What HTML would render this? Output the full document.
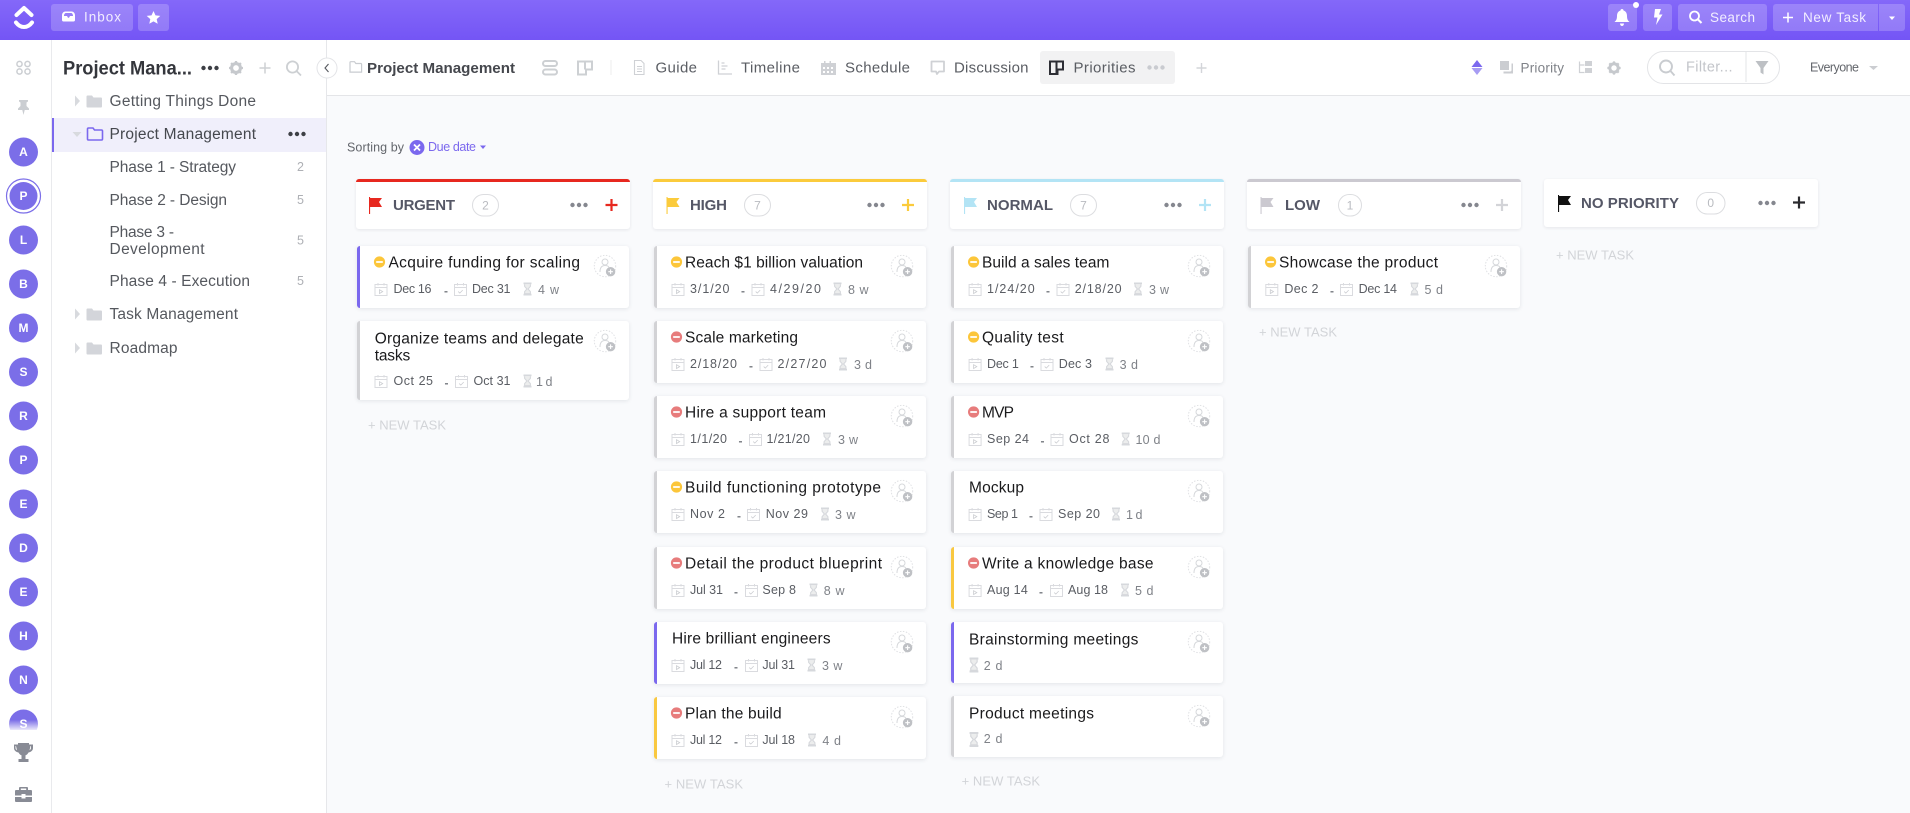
<!DOCTYPE html>
<html lang="en"><head><meta charset="utf-8"><title>Project Management - Priorities</title>
<style>
html,body{margin:0;padding:0;width:1910px;height:813px;overflow:hidden;background:#fff;font-family:"Liberation Sans",sans-serif}
.a{position:absolute}
#top{left:0;top:0;width:1910px;height:40px;background:linear-gradient(#8468f9,#7455f5)}
.b{position:absolute;top:4px;height:27px;background:rgba(255,255,255,.2);border-radius:3px}
#rail{left:0;top:40px;width:51px;height:773px;border-right:1px solid #e9eaed;background:#fff}
#side{left:52px;top:40px;width:274px;height:773px;border-right:1px solid #e6e7ea;background:#fff}
#sel{left:52px;top:118px;width:272px;height:34px;background:#f0effb;border-left:2px solid #7b68ee}
#main{left:327px;top:96px;width:1583px;height:717px;background:#f9fafc}
#hdr{left:327px;top:40px;width:1583px;height:55px;background:#fff;border-bottom:1px solid #e4e5e8}
#tab{left:1040px;top:51px;width:135px;height:33px;background:#f2f2f3;border-radius:3px}
#flt{left:1647px;top:51px;width:131px;height:31px;border:1px solid #e3e4e7;border-radius:17px;background:#fff}
.ch{position:absolute;background:#fff;border-radius:3px;box-shadow:0 1px 3px rgba(30,35,60,.09);box-sizing:border-box;border-top:3px solid}
.k{position:absolute;background:#fff;border-radius:3px;box-shadow:0 1px 4px rgba(30,35,60,.1);box-sizing:border-box;border-left:3px solid #d2d2d5}
svg{position:absolute;left:0;top:0;filter:blur(.3px)}
text{font-family:"Liberation Sans",sans-serif;dominant-baseline:central}
.t{font-size:15.5px;fill:#1a1a1c;transform:translateY(.8px)}
.m{font-size:12.5px;fill:#5a5d63}
.h{font-size:12.5px;fill:#7f8288}
.d{font-size:12px;font-weight:bold;fill:#7b7e84}
.s{font-size:15.5px;fill:#55585e;transform:translateY(.5px)}
.n{font-size:12.5px;fill:#aeb0b5}
.w{font-size:13.5px;fill:#f2eeff}
.v{font-size:15px;fill:#5a5d63}
.g{font-size:15px;font-weight:bold;fill:#555766;transform:translateY(.5px)}
.o{font-size:12px;fill:#b9bbc0;text-anchor:middle}
.nt{font-size:13px;fill:#d2d4d8}
.l{font-size:12px;font-weight:bold;fill:#fff;text-anchor:middle}
</style></head><body>
<div class="a" id="main"></div>
<div class="a" id="hdr"></div>
<div class="a" id="tab"></div>
<div class="a" id="flt"></div>
<div class="a" id="rail"></div>
<div class="a" id="side"></div>
<div class="a" id="sel"></div>
<div class="a" id="top"></div>
<div class="b" style="left:51px;width:82px"></div>
<div class="b" style="left:138px;width:31px"></div>
<div class="b" style="left:1608px;width:29px"></div>
<div class="b" style="left:1643px;width:29px"></div>
<div class="b" style="left:1678px;width:89px"></div>
<div class="b" style="left:1773px;width:105px;border-radius:3px 0 0 3px"></div>
<div class="b" style="left:1879px;width:26px;border-radius:0 3px 3px 0"></div>

<div class="ch" style="left:356px;top:179px;width:274px;height:50px;border-top-color:#e7281f"></div>
<div class="ch" style="left:653px;top:179px;width:274px;height:50px;border-top-color:#fbcb3c"></div>
<div class="ch" style="left:950px;top:179px;width:274px;height:50px;border-top-color:#b3e4f5"></div>
<div class="ch" style="left:1247px;top:179px;width:274px;height:50px;border-top-color:#cbc9d0"></div>
<div class="ch" style="left:1544px;top:179px;width:274px;height:48px;border-top:0"></div>

<div class="k" style="left:357px;top:246px;width:272px;height:62px;border-left-color:#7b68ee"></div>
<div class="k" style="left:357px;top:321px;width:272px;height:79px"></div>

<div class="k" style="left:654px;top:246px;width:272px;height:62px"></div>
<div class="k" style="left:654px;top:321px;width:272px;height:62px"></div>
<div class="k" style="left:654px;top:396px;width:272px;height:62px"></div>
<div class="k" style="left:654px;top:471px;width:272px;height:62px"></div>
<div class="k" style="left:654px;top:547px;width:272px;height:62px"></div>
<div class="k" style="left:654px;top:622px;width:272px;height:62px;border-left-color:#7b68ee"></div>
<div class="k" style="left:654px;top:697px;width:272px;height:62px;border-left-color:#f9c840"></div>

<div class="k" style="left:951px;top:246px;width:272px;height:62px"></div>
<div class="k" style="left:951px;top:321px;width:272px;height:62px"></div>
<div class="k" style="left:951px;top:396px;width:272px;height:62px"></div>
<div class="k" style="left:951px;top:471px;width:272px;height:62px"></div>
<div class="k" style="left:951px;top:547px;width:272px;height:62px;border-left-color:#f9c840"></div>
<div class="k" style="left:951px;top:622px;width:272px;height:61px;border-left-color:#7b68ee"></div>
<div class="k" style="left:951px;top:696px;width:272px;height:61px"></div>

<div class="k" style="left:1248px;top:246px;width:272px;height:62px"></div>

<svg width="1910" height="813" viewBox="0 0 1910 813" xmlns="http://www.w3.org/2000/svg">
<defs>
<linearGradient id="fd" x1="0" y1="0" x2="0" y2="1"><stop offset="0" stop-color="#fff" stop-opacity="0"/><stop offset="1" stop-color="#fff" stop-opacity=".85"/></linearGradient>
<g id="c1" fill="none" stroke="#dadbdf"><rect x=".5" y="1.5" width="12" height="11"/><path d="M.5 4.5h12M3.5 0v2.5M9.5 0v2.5"/><path d="M5 6.7v3.8l3.2-1.900z" stroke="#cbcdd1" stroke-width=".8"/></g>
<g id="c2" fill="none" stroke="#dadbdf"><rect x=".5" y="1.5" width="12" height="11"/><path d="M.5 4.5h12M3.5 0v2.5M9.5 0v2.5"/><path d="M4.2 8.6l1.600 1.500 2.900-3" stroke="#cbcdd1" stroke-width=".8"/></g>
<g id="hg"><path d="M.5 0h8v1.800H.5zM.5 11.200h8V13h-8z" fill="#d6d8dc"/><path d="M1.600 1.800v2L3.900 6.500 1.600 9.200v2h5.800v-2L5.100 6.500 7.400 3.800v-2" fill="#eceded" stroke="#d6d8dc" stroke-width="1.100"/></g>
<g id="st"><circle r="5.600" fill="currentColor"/><rect x="-3.400" y="-.9" width="6.800" height="1.800" rx=".6" fill="#fff"/></g>
<g id="av"><circle r="10.700" fill="none" stroke="#e0e1e4" stroke-width="1" stroke-dasharray="1.500 1.500"/><circle cy="-4" r="3" fill="none" stroke="#d6d8db"/><path d="M-5 6c0-5 2-6.500 5-6.500 2 0 3.500.5 4 2" fill="none" stroke="#d6d8db"/><circle cx="5.600" cy="5.700" r="4.700" fill="#bfc1c5"/><path d="M3.300 5.700h4.600M5.600 3.400v4.600" stroke="#fff" stroke-width="1.100"/></g>
<g id="dots" fill="currentColor"><circle cx="2.500" r="2.200"/><circle cx="9" r="2.200"/><circle cx="15.500" r="2.200"/></g>
<path id="fl" d="M0 0h1.100v17H0zM1.100 1H13l-3 4 3 5H1.100z" fill="currentColor"/>
<path id="pl" d="M-1.100-6h2.200v4.900H6v2.200H1.100V6h-2.200V1.100H-6v-2.200h4.900z" fill="currentColor"/>
<g id="fo"><path d="M0 2a1 1 0 0 1 1-1h4.500l1.500 2h7.500a1 1 0 0 1 1 1v8a1 1 0 0 1-1 1H1a1 1 0 0 1-1-1z" fill="#d3d5da"/></g>
<path id="tri" d="M0 0l5 5.500-5 5.500z" fill="#d8dade"/>
<g id="gr"><circle r="5.400" fill="none" stroke="currentColor" stroke-width="3.800"/><g stroke="currentColor" stroke-width="2.800"><path d="M0-8.500v3M0 8.500v-3M-8.500 0h3M8.500 0h-3M-6-6l2 2M6 6L4 4M-6 6l2-2M6-6L4-4"/></g></g>
</defs>

<!-- top bar -->
<path d="M16.500 15L24 8l7.500 7M16 22.500c4.500 6 11.500 6 16 0" fill="none" stroke="#fff" stroke-width="4" stroke-linecap="round" stroke-linejoin="round"/>
<path d="M62 20v-4.500c0-2.500 1.500-4 3.500-4h6c2 0 3.500 1.500 3.500 4V20c0 1-.7 1.500-1.500 1.500h-10c-.8 0-1.500-.5-1.500-1.500zm2-4h3l1 1.700h1l1-1.700h3c0-1.700-.8-3-2-3h-5c-1.200 0-2 1.300-2 3z" fill="#fff"/>
<text class="w" x="84" y="17" textLength="37">Inbox</text>
<path d="M153.500 11l2 4.400 4.800.5-3.600 3.200 1 4.700-4.200-2.400-4.200 2.400 1-4.700-3.600-3.200 4.800-.5z" fill="#fff"/>
<path d="M1622 9c.8 0 1.500.6 1.500 1.500 2.700.8 3.500 3.200 3.500 5.500 0 3 .8 4.500 2.500 6h-15c1.700-1.500 2.500-3 2.500-6 0-2.300.8-4.700 3.500-5.500 0-.9.700-1.500 1.500-1.500zM1620 23.500h4c0 1.500-1 2.500-2 2.500s-2-1-2-2.500z" fill="#fff"/>
<circle cx="1636" cy="5" r="3" fill="#fff"/>
<path d="M1655 9h6l-2 5.500h3.500l-6.500 10.500 1.500-7.500h-3.500z" fill="#fff"/>
<circle cx="1694.500" cy="16" r="4.500" fill="none" stroke="#fff" stroke-width="1.800"/><path d="M1698 19.500l3.500 3.500" stroke="#fff" stroke-width="2"/>
<text class="w" x="1710" y="17.500" textLength="45">Search</text>
<path d="M1783 17.500h10M1788 12.500v10" stroke="#fff" stroke-width="1.500"/>
<text class="w" x="1803" y="17.500" textLength="63">New Task</text>
<path d="M1889 16.500h6l-3 3.500z" fill="#fff"/>

<!-- rail -->
<g fill="none" stroke="#cbced2" stroke-width="1.500"><circle cx="19.500" cy="64" r="2.600"/><circle cx="27.500" cy="64" r="2.600"/><circle cx="19.500" cy="71.500" r="2.600"/><circle cx="27.500" cy="71.500" r="2.600"/></g>
<path d="M19 100h9v1.500l-1.500 1v3.500l2.500 2.500v1.500h-4.300l-1.200 5-1.200-5H18v-1.500l2.500-2.500v-3.500l-1.500-1z" fill="#cbced2"/>
<g fill="#7b6ee8">
<circle cx="23.500" cy="152" r="14.500"/><circle cx="23.500" cy="196" r="14"/><circle cx="23.500" cy="240" r="14.500"/><circle cx="23.500" cy="284" r="14.500"/><circle cx="23.500" cy="328" r="14.500"/><circle cx="23.500" cy="372" r="14.500"/><circle cx="23.500" cy="416" r="14.500"/><circle cx="23.500" cy="460" r="14.500"/><circle cx="23.500" cy="504" r="14.500"/><circle cx="23.500" cy="548" r="14.500"/><circle cx="23.500" cy="592" r="14.500"/><circle cx="23.500" cy="636" r="14.500"/><circle cx="23.500" cy="680" r="14.500"/><circle cx="23.500" cy="724" r="14.500"/>
</g>
<circle cx="23.500" cy="196" r="17" fill="none" stroke="#7b6ee8" stroke-width="1.200"/>
<text class="l" x="23.500" y="152">A</text><text class="l" x="23.500" y="196">P</text><text class="l" x="23.500" y="240">L</text><text class="l" x="23.500" y="284">B</text><text class="l" x="23.500" y="328">M</text><text class="l" x="23.500" y="372">S</text><text class="l" x="23.500" y="416">R</text><text class="l" x="23.500" y="460">P</text><text class="l" x="23.500" y="504">E</text><text class="l" x="23.500" y="548">D</text><text class="l" x="23.500" y="592">E</text><text class="l" x="23.500" y="636">H</text><text class="l" x="23.500" y="680">N</text><text class="l" x="23.500" y="724">S</text>
<rect x="5" y="720" width="40" height="10" fill="url(#fd)"/><rect x="5" y="730" width="40" height="12" fill="#fff"/>
<path d="M18 743h11v1.500h4v3.500c0 2.500-2 4-4.500 4.500-.7 1.500-2 2.500-3 2.800V759h3v3h-10v-3h3v-3.700c-1-.3-2.300-1.300-3-2.800-2.500-.5-4.500-2-4.500-4.500v-3.500h4zm-2 3h-.5v2c0 1 .8 1.800 1.500 2.200zm15 0h-.5l-1 4.200c.7-.4 1.500-1.200 1.500-2.200z" fill="#888b95"/>
<path d="M20 787h7a1 1 0 0 1 1 1v2h3a1 1 0 0 1 1 1v4.500h-6.500v-1.500h-4v1.500H15V791a1 1 0 0 1 1-1h3v-2a1 1 0 0 1 1-1zm.8 1.500v1.500h5.400v-1.500zM15 797h6.500v1.500h4V797H32v4a1 1 0 0 1-1 1H16a1 1 0 0 1-1-1z" fill="#888b95"/>

<!-- sidebar -->
<text x="63" y="68.500" font-size="19.500" font-weight="bold" fill="#34363c" textLength="129" lengthAdjust="spacingAndGlyphs">Project Mana...</text>
<use href="#dots" x="201" y="68" color="#3d3f45"/>
<use href="#gr" transform="translate(236 68) scale(.82)" color="#c6c9cd"/>
<path d="M259.500 68h11M265 62.500v11" stroke="#cdd0d3" stroke-width="1.500"/>
<circle cx="292.500" cy="67" r="5.600" fill="none" stroke="#cdd0d3" stroke-width="1.800"/><path d="M296.500 71l4.500 4.500" stroke="#cdd0d3" stroke-width="1.800"/>
<circle cx="327" cy="68" r="10" fill="#fff" stroke="#e3e4e7"/><path d="M328.500 64l-3.500 4 3.500 4" fill="none" stroke="#55585e" stroke-width="1.100"/>

<use href="#tri" x="75" y="95.500"/><use href="#fo" x="86.500" y="94.500"/>
<text class="s" x="109.500" y="101" textLength="146.500">Getting Things Done</text>
<path d="M72.500 132h9l-4.500 5z" fill="#d8dade"/>
<path d="M87.500 129a1 1 0 0 1 1-1h4.500l1.500 2h7a1 1 0 0 1 1 1v8a1 1 0 0 1-1 1h-13a1 1 0 0 1-1-1z" fill="none" stroke="#7b68ee" stroke-width="1.600"/>
<text class="s" x="109.500" y="134" textLength="146.500" style="fill:#45484e">Project Management</text>
<use href="#dots" x="288" y="134" color="#3d3f45"/>
<text class="s" x="109.500" y="167" textLength="126.500">Phase 1 - Strategy</text><text class="n" x="297" y="167">2</text>
<text class="s" x="109.500" y="200" textLength="117.500">Phase 2 - Design</text><text class="n" x="297" y="200">5</text>
<text class="s" x="109.500" y="232" textLength="64.500">Phase 3 -</text><text class="s" x="109.500" y="249" textLength="95">Development</text><text class="n" x="297" y="240.500">5</text>
<text class="s" x="109.500" y="281" textLength="140.500">Phase 4 - Execution</text><text class="n" x="297" y="281">5</text>
<use href="#tri" x="75" y="308.500"/><use href="#fo" x="86.500" y="307.500"/>
<text class="s" x="109.500" y="314" textLength="128.500">Task Management</text>
<use href="#tri" x="75" y="342.500"/><use href="#fo" x="86.500" y="341.500"/>
<text class="s" x="109.500" y="348" textLength="68">Roadmap</text>

<!-- header -->
<path d="M350 62.500a.8.8 0 0 1 .8-.8h3.700l1.300 1.800h5a.8.8 0 0 1 .8.8v7.800h-11.600z" fill="none" stroke="#c9ccd0" stroke-width="1.200"/>
<text x="367" y="68.500" font-size="15" font-weight="bold" fill="#45474d" textLength="148" lengthAdjust="spacingAndGlyphs">Project Management</text>
<g fill="none" stroke="#cdd0d3" stroke-width="2"><rect x="543" y="61" width="14" height="5" rx="2.500"/><rect x="543" y="69.500" width="14" height="5" rx="2.500"/><path d="M578 61.500h14v8h-6v5h-8zM585 61.500v8"/></g>
<path d="M611 60v15" stroke="#eceded"/>
<path d="M634.500 60.500h6.500l3 3v11h-9.500zM637 66.500h5M637 69h5M637 71.500h5" fill="none" stroke="#cfd1d5" stroke-width="1.100"/>
<text class="v" x="655.500" y="68" textLength="41.500">Guide</text>
<path d="M718.500 60.500v13.500h13.500M721.500 63h3M721.500 66h6M721.500 69h4" fill="none" stroke="#cfd1d5" stroke-width="1.300"/>
<text class="v" x="741" y="68" textLength="59">Timeline</text>
<path d="M821 63h3v-2h1.500v2h4v-2h1.500v2h5v12h-15z" fill="#cfd1d5"/><path d="M823 67h2v2h-2zM827 67h2v2h-2zM831 67h2v2h-2zM823 71h2v2h-2zM827 71h2v2h-2zM831 71h2v2h-2z" fill="#fff"/>
<text class="v" x="845" y="68" textLength="65">Schedule</text>
<path d="M931.500 61.500h12.500v10h-5l-2 2.500-1-2.500h-4.500z" fill="none" stroke="#cfd1d5" stroke-width="1.800" stroke-linejoin="round"/>
<text class="v" x="954" y="68" textLength="74.500">Discussion</text>
<path d="M1050 61.500h13v8h-5.500v4.500H1050zM1056.500 61.500v12" fill="none" stroke="#2d2e35" stroke-width="2"/>
<text class="v" x="1073.500" y="68" textLength="62">Priorities</text>
<use href="#dots" x="1147" y="67.500" color="#c9cbd0"/>
<path d="M1196.500 68h10M1201.500 63v10" stroke="#d3d5d9" stroke-width="1.400"/>

<path d="M1477 60l5.500 7h-11z" fill="#7b68ee"/><path d="M1477 75l5.500-7h-11z" fill="#a79cf3"/>
<path d="M1500 61h9v9h-9z" fill="#cbcdd1"/><path d="M1503.500 71.500h6.500a1.500 1.500 0 0 0 1.500-1.500v-6.500h1.500v10h-9.500z" fill="#cbcdd1"/>
<text x="1520.500" y="68" font-size="13.500" fill="#7f8288" textLength="43.500">Priority</text>
<path d="M1579.500 61.500v11h5M1579.500 65h5" fill="none" stroke="#cfd1d5" stroke-width="1.200"/><path d="M1585 61h7v5h-7zM1585 68h7v5h-7z" fill="#cfd1d5"/>
<use href="#gr" transform="translate(1614 68) scale(.78)" color="#c6c9cd"/>
<circle cx="1666" cy="66.500" r="6" fill="none" stroke="#c9ccd0" stroke-width="1.900"/><path d="M1670.500 71l4 4.500" stroke="#c9ccd0" stroke-width="1.900"/>
<text x="1686" y="67.500" font-size="14.500" fill="#c3c5ca" textLength="46.500">Filter...</text>
<path d="M1746 52v30" stroke="#e3e4e7"/>
<path d="M1755.500 61h13l-5 7v6.500l-3-2V68z" fill="#bdc0c4"/>
<text x="1810" y="67.500" font-size="12.500" fill="#63666c" textLength="49">Everyone</text>
<path d="M1869 66h9l-4.500 4z" fill="#cbcdd1"/>

<text x="347" y="147.500" font-size="12.500" fill="#63666c" textLength="57">Sorting by</text>
<circle cx="417" cy="147.500" r="7.500" fill="#7b68ee"/><path d="M414 144.500l6 6M420 144.500l-6 6" stroke="#fff" stroke-width="1.800"/>
<text x="428" y="147" font-size="12.500" fill="#7b68ee" textLength="48">Due date</text>
<path d="M480 145.500h6l-3 3.500z" fill="#7b68ee"/>

<!-- column headers -->
<use href="#fl" x="369" y="197" color="#e7281f"/>
<text class="g" x="393" y="205" textLength="62">URGENT</text>
<rect x="472.500" y="194.500" width="26" height="21.500" rx="11" fill="#fff" stroke="#dcdde0"/><text class="o" x="485.500" y="205.500">2</text>
<use href="#dots" x="570" y="205" color="#85878f"/><use href="#pl" x="611.500" y="205" color="#e7281f"/>

<use href="#fl" x="666.500" y="197" color="#fbcb3c"/>
<text class="g" x="690" y="205" textLength="37">HIGH</text>
<rect x="744.500" y="194.500" width="26" height="21.500" rx="11" fill="#fff" stroke="#dcdde0"/><text class="o" x="757.500" y="205.500">7</text>
<use href="#dots" x="867" y="205" color="#85878f"/><use href="#pl" x="908" y="205" color="#fbcb3c"/>

<use href="#fl" x="964" y="197" color="#b3e4f5"/>
<text class="g" x="987" y="205" textLength="66">NORMAL</text>
<rect x="1070.500" y="194.500" width="26" height="21.500" rx="11" fill="#fff" stroke="#dcdde0"/><text class="o" x="1083.500" y="205.500">7</text>
<use href="#dots" x="1164" y="205" color="#85878f"/><use href="#pl" x="1205" y="205" color="#b3e4f5"/>

<use href="#fl" x="1260.500" y="197" color="#cbc9d0"/>
<text class="g" x="1285" y="205" textLength="35">LOW</text>
<rect x="1338.500" y="194.500" width="23" height="21.500" rx="10.700" fill="#fff" stroke="#dcdde0"/><text class="o" x="1350" y="205.500">1</text>
<use href="#dots" x="1461" y="205" color="#85878f"/><use href="#pl" x="1502" y="205" color="#d3d4d8"/>

<use href="#fl" x="1558" y="195" color="#111"/>
<text class="g" x="1581" y="203" textLength="98">NO PRIORITY</text>
<rect x="1696.500" y="192.500" width="28.500" height="21.500" rx="10.700" fill="#fff" stroke="#dcdde0"/><text class="o" x="1710.700" y="203">0</text>
<use href="#dots" x="1758" y="203" color="#85878f"/><use href="#pl" x="1799" y="202.500" color="#2b2b2e"/>

<!-- column 1 -->
<g transform="translate(0 246)"><use href="#st" x="379.500" y="16" color="#fcc63a"/><text class="t" x="388.500" y="16" textLength="191.500">Acquire funding for scaling</text>
<use href="#c1" x="374.500" y="37"/><text class="m" x="393.500" y="43" textLength="38">Dec 16</text><text class="d" x="444" y="45">-</text><use href="#c2" x="454" y="37"/><text class="m" x="472" y="43" textLength="38.500">Dec 31</text><use href="#hg" x="523" y="36.500"/><text class="h" x="538" y="44" textLength="21">4 w</text><use href="#av" x="605" y="20"/></g>
<g transform="translate(0 321)"><text class="t" x="374.700" y="17" textLength="209">Organize teams and delegate</text><text class="t" x="374.700" y="34" textLength="35.500">tasks</text>
<use href="#c1" x="374.500" y="54"/><text class="m" x="393.500" y="60" textLength="39.500">Oct 25</text><text class="d" x="444.500" y="62">-</text><use href="#c2" x="455" y="54"/><text class="m" x="473.500" y="60" textLength="37">Oct 31</text><use href="#hg" x="523" y="53.500"/><text class="h" x="536" y="61" textLength="16.500">1 d</text><use href="#av" x="605" y="20"/></g>
<text class="nt" x="368" y="425" textLength="78">+ NEW TASK</text>

<!-- column 2 -->
<g transform="translate(0 246)"><use href="#st" x="676.500" y="16" color="#fcc63a"/><text class="t" x="685" y="16" textLength="178">Reach $1 billion valuation</text>
<use href="#c1" x="671.500" y="37"/><text class="m" x="690" y="43" textLength="39.500">3/1/20</text><text class="d" x="741" y="45">-</text><use href="#c2" x="751.500" y="37"/><text class="m" x="770" y="43" textLength="51">4/29/20</text><use href="#hg" x="833" y="36.500"/><text class="h" x="848" y="44" textLength="20.500">8 w</text><use href="#av" x="902" y="20"/></g>
<g transform="translate(0 321)"><use href="#st" x="676.500" y="16" color="#e77c7c"/><text class="t" x="685" y="16" textLength="113">Scale marketing</text>
<use href="#c1" x="671.500" y="37"/><text class="m" x="690" y="43" textLength="47">2/18/20</text><text class="d" x="749" y="45">-</text><use href="#c2" x="759.500" y="37"/><text class="m" x="777.500" y="43" textLength="49">2/27/20</text><use href="#hg" x="838.500" y="36.500"/><text class="h" x="854" y="44" textLength="18">3 d</text><use href="#av" x="902" y="20"/></g>
<g transform="translate(0 396)"><use href="#st" x="676.500" y="16" color="#e77c7c"/><text class="t" x="685" y="16" textLength="141">Hire a support team</text>
<use href="#c1" x="671.500" y="37"/><text class="m" x="690" y="43" textLength="37">1/1/20</text><text class="d" x="738.500" y="45">-</text><use href="#c2" x="749" y="37"/><text class="m" x="766.500" y="43" textLength="43.500">1/21/20</text><use href="#hg" x="822.500" y="36.500"/><text class="h" x="838" y="44" textLength="20">3 w</text><use href="#av" x="902" y="20"/></g>
<g transform="translate(0 471)"><use href="#st" x="676.500" y="16" color="#fcc63a"/><text class="t" x="685" y="16" textLength="196">Build functioning prototype</text>
<use href="#c1" x="671.500" y="37"/><text class="m" x="690" y="43" textLength="35">Nov 2</text><text class="d" x="737" y="45">-</text><use href="#c2" x="747" y="37"/><text class="m" x="765.700" y="43" textLength="42.300">Nov 29</text><use href="#hg" x="820.500" y="36.500"/><text class="h" x="835" y="44" textLength="20.500">3 w</text><use href="#av" x="902" y="20"/></g>
<g transform="translate(0 547)"><use href="#st" x="676.500" y="16" color="#e77c7c"/><text class="t" x="685" y="16" textLength="197">Detail the product blueprint</text>
<use href="#c1" x="671.500" y="37"/><text class="m" x="690" y="43" textLength="33">Jul 31</text><text class="d" x="734" y="45">-</text><use href="#c2" x="745" y="37"/><text class="m" x="762.400" y="43" textLength="33.600">Sep 8</text><use href="#hg" x="809" y="36.500"/><text class="h" x="823.700" y="44" textLength="20.800">8 w</text><use href="#av" x="902" y="20"/></g>
<g transform="translate(0 622)"><text class="t" x="672" y="16" textLength="158.600">Hire brilliant engineers</text>
<use href="#c1" x="671.500" y="37"/><text class="m" x="690" y="43" textLength="32">Jul 12</text><text class="d" x="734" y="45">-</text><use href="#c2" x="745" y="37"/><text class="m" x="762.400" y="43" textLength="32.600">Jul 31</text><use href="#hg" x="807" y="36.500"/><text class="h" x="822" y="44" textLength="20.400">3 w</text><use href="#av" x="902" y="20"/></g>
<g transform="translate(0 697)"><use href="#st" x="676.500" y="16" color="#e77c7c"/><text class="t" x="685" y="16" textLength="96.600">Plan the build</text>
<use href="#c1" x="671.500" y="37"/><text class="m" x="690" y="43" textLength="32">Jul 12</text><text class="d" x="734" y="45">-</text><use href="#c2" x="745" y="37"/><text class="m" x="762.400" y="43" textLength="32.600">Jul 18</text><use href="#hg" x="807.500" y="36.500"/><text class="h" x="822.400" y="44" textLength="18.600">4 d</text><use href="#av" x="902" y="20"/></g>
<text class="nt" x="664.500" y="784" textLength="78.500">+ NEW TASK</text>

<!-- column 3 -->
<g transform="translate(0 246)"><use href="#st" x="973.600" y="16" color="#fcc63a"/><text class="t" x="982" y="16" textLength="127.400">Build a sales team</text>
<use href="#c1" x="968.600" y="37"/><text class="m" x="987" y="43" textLength="47.700">1/24/20</text><text class="d" x="1046" y="45">-</text><use href="#c2" x="1056.500" y="37"/><text class="m" x="1074.700" y="43" textLength="46.900">2/18/20</text><use href="#hg" x="1133.500" y="36.500"/><text class="h" x="1149" y="44" textLength="20">3 w</text><use href="#av" x="1199" y="20"/></g>
<g transform="translate(0 321)"><use href="#st" x="973.600" y="16" color="#fcc63a"/><text class="t" x="982" y="16" textLength="81.700">Quality test</text>
<use href="#c1" x="968.600" y="37"/><text class="m" x="987" y="43" textLength="31.800">Dec 1</text><text class="d" x="1030" y="45">-</text><use href="#c2" x="1040.500" y="37"/><text class="m" x="1058.800" y="43" textLength="33.200">Dec 3</text><use href="#hg" x="1105" y="36.500"/><text class="h" x="1119.600" y="44" textLength="18.400">3 d</text><use href="#av" x="1199" y="20"/></g>
<g transform="translate(0 396)"><use href="#st" x="973.600" y="16" color="#e77c7c"/><text class="t" x="982" y="16" textLength="32">MVP</text>
<use href="#c1" x="968.600" y="37"/><text class="m" x="987" y="43" textLength="42">Sep 24</text><text class="d" x="1040.500" y="45">-</text><use href="#c2" x="1050.500" y="37"/><text class="m" x="1069" y="43" textLength="40.400">Oct 28</text><use href="#hg" x="1121.200" y="36.500"/><text class="h" x="1135.500" y="44" textLength="24.900">10 d</text><use href="#av" x="1199" y="20"/></g>
<g transform="translate(0 471)"><text class="t" x="969" y="16" textLength="55">Mockup</text>
<use href="#c1" x="968.600" y="37"/><text class="m" x="987" y="43" textLength="31">Sep 1</text><text class="d" x="1029" y="45">-</text><use href="#c2" x="1039.500" y="37"/><text class="m" x="1058" y="43" textLength="42">Sep 20</text><use href="#hg" x="1111.500" y="36.500"/><text class="h" x="1126" y="44" textLength="16.400">1 d</text><use href="#av" x="1199" y="20"/></g>
<g transform="translate(0 547)"><use href="#st" x="973.600" y="16" color="#e77c7c"/><text class="t" x="982" y="16" textLength="171.500">Write a knowledge base</text>
<use href="#c1" x="968.600" y="37"/><text class="m" x="987" y="43" textLength="40.800">Aug 14</text><text class="d" x="1039" y="45">-</text><use href="#c2" x="1050" y="37"/><text class="m" x="1068" y="43" textLength="40">Aug 18</text><use href="#hg" x="1120.500" y="36.500"/><text class="h" x="1135" y="44" textLength="18.500">5 d</text><use href="#av" x="1199" y="20"/></g>
<g transform="translate(0 622)"><text class="t" x="969" y="17" textLength="169.400">Brainstorming meetings</text>
<use href="#hg" transform="translate(969 35.500) scale(1.100 1.150)"/><text class="h" x="983.700" y="44" textLength="18.800">2 d</text><use href="#av" x="1199" y="20"/></g>
<g transform="translate(0 696)"><text class="t" x="969" y="17" textLength="125">Product meetings</text>
<use href="#hg" transform="translate(969 36) scale(1.100 1.150)"/><text class="h" x="983.700" y="43" textLength="18.800">2 d</text><use href="#av" x="1199" y="20"/></g>
<text class="nt" x="961.600" y="781" textLength="78.400">+ NEW TASK</text>

<!-- column 4 -->
<g transform="translate(0 246)"><use href="#st" x="1270.600" y="16" color="#fcc63a"/><text class="t" x="1279" y="16" textLength="159">Showcase the product</text>
<use href="#c1" x="1265.300" y="37"/><text class="m" x="1284.400" y="43" textLength="34.100">Dec 2</text><text class="d" x="1330" y="45">-</text><use href="#c2" x="1340" y="37"/><text class="m" x="1358.600" y="43" textLength="38.400">Dec 14</text><use href="#hg" x="1410" y="36.500"/><text class="h" x="1424.500" y="44" textLength="18.500">5 d</text><use href="#av" x="1496" y="20"/></g>
<text class="nt" x="1259" y="332" textLength="78">+ NEW TASK</text>

<!-- column 5 -->
<text class="nt" x="1556" y="255" textLength="78">+ NEW TASK</text>
</svg>
</body></html>
